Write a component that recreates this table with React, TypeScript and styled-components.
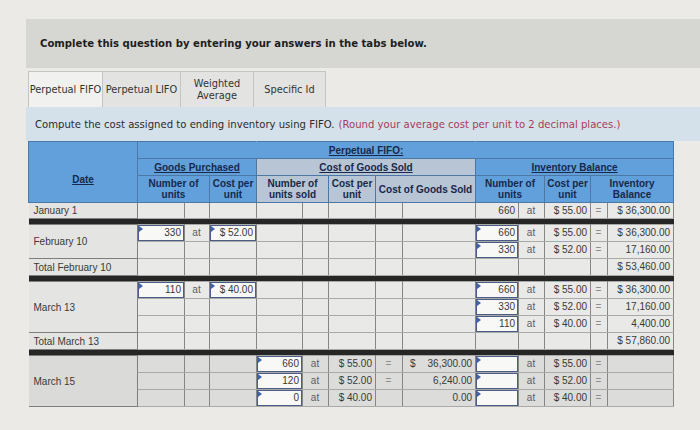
import React from 'react';
import styled, { createGlobalStyle, css } from 'styled-components';

const Global = createGlobalStyle`
  html, body { margin: 0; padding: 0; background: #ebeae7; }
  body { width: 700px; height: 430px; overflow: hidden; font-family: "DejaVu Sans", sans-serif; }
`;

const Page = styled.div`
  padding: 19px 0 0 26px;
  display: flex;
  flex-direction: column;
`;

const Banner = styled.div`
  height: 49px;
  background: #d6d6d3;
  display: flex;
  align-items: center;
  padding-left: 14px;
  font-family: "DejaVu Sans", sans-serif;
  font-weight: bold;
  font-size: 10.1px;
  color: #1e1e1e;
`;

const TabBar = styled.div`
  display: flex;
  margin: 3px 0 0 2px;
  height: 36px;
`;

const Tab = styled.div<{ $active?: boolean; $w: number }>`
  width: ${p => p.$w}px;
  box-sizing: border-box;
  margin-left: -1px;
  border: 1px solid #c4c4c2;
  border-bottom: none;
  background: ${p => (p.$active ? '#f1f1ef' : '#e3e3e1')};
  display: flex;
  align-items: center;
  justify-content: center;
  text-align: center;
  font-size: 9.8px;
  line-height: 12px;
  color: #333;
  white-space: nowrap;
  &:first-child { margin-left: 0; }
`;

const Instruction = styled.div`
  height: 34px;
  background: #d5e1ea;
  display: flex;
  align-items: center;
  padding-left: 9px;
  font-size: 10.1px;
  color: #2c2c2c;
  white-space: nowrap;
`;

const Hint = styled.span`
  color: #a73b58;
  margin-left: 4px;
`;

const TableWrap = styled.div`
  margin-left: 2px;
`;

const Table = styled.table`
  border-collapse: collapse;
  table-layout: fixed;
  width: 645px;
  font-family: "Liberation Sans", Arial, sans-serif;
  font-size: 10px;
  color: #393939;
`;

const Row = styled.tr<{ $h: number }>`
  height: ${p => p.$h}px;
`;

const Th = styled.th<{ $tone?: 'blue' | 'steel'; $u?: boolean; $open?: 'left' | 'right' | 'both' }>`
  background: ${p => (p.$tone === 'steel' ? '#b7c5d5' : '#62a0dc')};
  color: #17284a;
  font-weight: bold;
  font-size: 10px;
  line-height: 11px;
  text-align: center;
  padding: 0 1px;
  border: 1px solid #4d78a6;
  text-decoration: ${p => (p.$u ? 'underline' : 'none')};
  ${p => (p.$open === 'left' || p.$open === 'both') && css`border-left-color: #62a0dc;`}
  ${p => (p.$open === 'right' || p.$open === 'both') && css`border-right-color: #62a0dc;`}
`;

const DateHead = styled(Th)`
  vertical-align: top;
  padding-top: 32px;
`;

const Sep = styled.td`
  height: 5px;
  padding: 0;
  background: #262626;
  border: none;
`;

const DateCell = styled.td<{ $dark?: boolean }>`
  background: ${p => (p.$dark ? '#dadad8' : '#e4e4e2')};
  padding: 0 0 0 5px;
  border: 1px solid #7e7e7e;
  border-left: none;
  white-space: nowrap;
  color: #3a3a3a;
`;

type Kind = 'blank' | 'num' | 'input' | 'at' | 'eq' | 'split';

const Td = styled.td<{ $k: Kind; $dark?: boolean }>`
  position: relative;
  padding: 0 3px 0 2px;
  line-height: 12px;
  white-space: nowrap;
  border-top: 1px solid #a9a9a7;
  border-bottom: 1px solid #a9a9a7;
  border-left: 1px solid #868684;
  border-right: 1px solid #868684;
  background: ${p => (p.$dark ? '#dcdcda' : '#e9e9e7')};
  text-align: right;
  ${p => p.$k === 'at' && css`text-align: center; color: #5d5d5d;`}
  ${p => p.$k === 'eq' && css`text-align: center; color: #8e8e8e;`}
  ${p =>
    p.$k === 'input' &&
    css`
      background: #f8f8f7;
      box-shadow: inset 0 0 0 1px #4b5d86;
      &::before {
        content: '';
        position: absolute;
        top: 1px;
        left: 1px;
        border-left: 4px solid #3f63aa;
        border-top: 3px solid transparent;
        border-bottom: 3px solid transparent;
      }
    `}
`;

const Split = styled.span`
  display: flex;
  justify-content: space-between;
  padding-left: 5px;
`;

type C = { k: Kind; v?: string };
const B: C = { k: 'blank' };
const AT: C = { k: 'at', v: 'at' };
const EQ: C = { k: 'eq', v: '=' };
const n = (v: string): C => ({ k: 'num', v });
const inp = (v = ''): C => ({ k: 'input', v });
const split = (v: string): C => ({ k: 'split', v });
const blanks = (c: number): C[] => Array.from({ length: c }, () => B);

type Block = { date: string; rows: C[][]; dark?: boolean } | 'sep';

const blocks: Block[] = [
  { date: 'January 1', rows: [[...blanks(8), n('660'), AT, n('$ 55.00'), EQ, n('$ 36,300.00')]] },
  'sep',
  {
    date: 'February 10',
    rows: [
      [inp('330'), AT, inp('$ 52.00'), ...blanks(5), inp('660'), AT, n('$ 55.00'), EQ, n('$ 36,300.00')],
      [...blanks(8), inp('330'), AT, n('$ 52.00'), EQ, n('17,160.00')],
    ],
  },
  { date: 'Total February 10', rows: [[...blanks(12), n('$ 53,460.00')]] },
  'sep',
  {
    date: 'March 13',
    rows: [
      [inp('110'), AT, inp('$ 40.00'), ...blanks(5), inp('660'), AT, n('$ 55.00'), EQ, n('$ 36,300.00')],
      [...blanks(8), inp('330'), AT, n('$ 52.00'), EQ, n('17,160.00')],
      [...blanks(8), inp('110'), AT, n('$ 40.00'), EQ, n('4,400.00')],
    ],
  },
  { date: 'Total March 13', rows: [[...blanks(12), n('$ 57,860.00')]] },
  'sep',
  {
    date: 'March 15',
    dark: true,
    rows: [
      [...blanks(3), inp('660'), AT, n('$ 55.00'), EQ, split('36,300.00'), inp(), AT, n('$ 55.00'), EQ, B],
      [...blanks(3), inp('120'), AT, n('$ 52.00'), EQ, n('6,240.00'), inp(), AT, n('$ 52.00'), EQ, B],
      [...blanks(3), inp('0'), AT, n('$ 40.00'), B, n('0.00'), inp(), AT, n('$ 40.00'), EQ, B],
    ],
  },
];

const widths = [109, 47, 25, 47, 46, 26, 47, 27, 73, 43, 26, 46, 17, 66];

function Cell({ c, dark }: { c: C; dark?: boolean }) {
  return (
    <Td $k={c.k} $dark={dark}>
      {c.k === 'split' ? (
        <Split>
          <span>$</span>
          <span>{c.v}</span>
        </Split>
      ) : (
        c.v
      )}
    </Td>
  );
}

export default function App() {
  return (
    <>
      <Global />
      <Page>
        <Banner>Complete this question by entering your answers in the tabs below.</Banner>
        <TabBar>
          <Tab $active $w={75}>Perpetual FIFO</Tab>
          <Tab $w={79}>Perpetual LIFO</Tab>
          <Tab $w={74}>Weighted<br />Average</Tab>
          <Tab $w={73}>Specific Id</Tab>
        </TabBar>
        <Instruction>
          Compute the cost assigned to ending inventory using FIFO.
          <Hint>(Round your average cost per unit to 2 decimal places.)</Hint>
        </Instruction>
        <TableWrap>
          <Table>
            <colgroup>
              {widths.map((w, i) => (
                <col key={i} style={{ width: w }} />
              ))}
            </colgroup>
            <thead>
              <Row $h={17}>
                <DateHead rowSpan={3} $u>Date</DateHead>
                <Th colSpan={3} $open="right" />
                <Th colSpan={5} $u $open="both">Perpetual FIFO:</Th>
                <Th colSpan={5} $open="left" />
              </Row>
              <Row $h={17}>
                <Th colSpan={3} $u>Goods Purchased</Th>
                <Th colSpan={5} $tone="steel" $u>Cost of Goods Sold</Th>
                <Th colSpan={5} $u>Inventory Balance</Th>
              </Row>
              <Row $h={27}>
                <Th colSpan={2}>Number of<br />units</Th>
                <Th>Cost per<br />unit</Th>
                <Th colSpan={2} $tone="steel">Number of<br />units sold</Th>
                <Th $tone="steel">Cost per<br />unit</Th>
                <Th colSpan={2} $tone="steel">Cost of Goods Sold</Th>
                <Th colSpan={2}>Number of<br />units</Th>
                <Th>Cost per<br />unit</Th>
                <Th colSpan={2}>Inventory<br />Balance</Th>
              </Row>
            </thead>
            <tbody>
              {blocks.map((b, bi) =>
                b === 'sep' ? (
                  <Row key={bi} $h={5}>
                    <Sep colSpan={14} />
                  </Row>
                ) : (
                  b.rows.map((r, ri) => (
                    <Row key={`${bi}-${ri}`} $h={bi === 0 ? 16 : 17}>
                      {ri === 0 && (
                        <DateCell rowSpan={b.rows.length} $dark={b.dark}>
                          {b.date}
                        </DateCell>
                      )}
                      {r.map((c, ci) => (
                        <Cell key={ci} c={c} dark={b.dark} />
                      ))}
                    </Row>
                  ))
                )
              )}
            </tbody>
          </Table>
        </TableWrap>
      </Page>
    </>
  );
}
